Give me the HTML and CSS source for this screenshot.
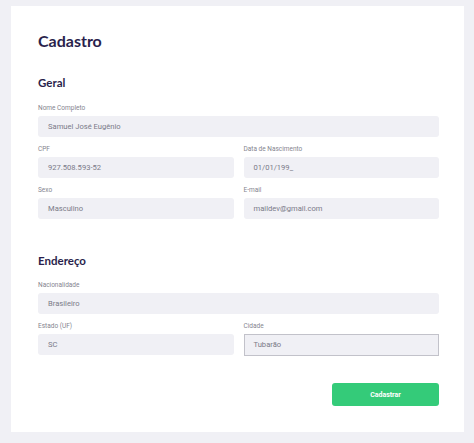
FILE: index.html
```html
<!DOCTYPE html>
<html lang="pt-BR">
<head>
<meta charset="utf-8">
<title>Cadastro</title>
<link rel="stylesheet" href="styles.css">
</head>
<body>
<form class="card">
  <h1 class="title">Cadastro</h1>

  <section class="section">
    <h2 class="section-title">Geral</h2>
    <div class="field">
      <label class="label">Nome Completo</label>
      <div class="input">Samuel José Eugênio</div>
    </div>
    <div class="row">
      <div class="field">
        <label class="label">CPF</label>
        <div class="input">927.508.593-52</div>
      </div>
      <div class="field">
        <label class="label">Data de Nascimento</label>
        <div class="input">01/01/199_</div>
      </div>
    </div>
    <div class="row">
      <div class="field">
        <label class="label">Sexo</label>
        <div class="input">Masculino</div>
      </div>
      <div class="field">
        <label class="label">E-mail</label>
        <div class="input">maildev@gmail.com</div>
      </div>
    </div>
  </section>

  <section class="section section-address">
    <h2 class="section-title">Endereço</h2>
    <div class="field">
      <label class="label">Nacionalidade</label>
      <div class="input">Brasileiro</div>
    </div>
    <div class="row">
      <div class="field">
        <label class="label">Estado (UF)</label>
        <div class="input">SC</div>
      </div>
      <div class="field">
        <label class="label">Cidade</label>
        <div class="input input-select">Tubarão</div>
      </div>
    </div>
  </section>

  <div class="actions">
    <button type="button" class="button">Cadastrar</button>
  </div>
</form>
</body>
</html>
```

FILE: styles.css
```css
* { box-sizing: border-box; }

html, body {
  margin: 0;
  padding: 0;
  background: #f0f0f5;
}

body {
  font-family: Roboto, "Liberation Sans", sans-serif;
  color: #7a7a88;
  padding: 6px 10px 11px 11px;
}

.card {
  background: #ffffff;
  height: 426px;
  padding: 25px 25px 0 27px;
  display: flex;
  flex-direction: column;
}

.title {
  margin: 0;
  font-family: Lato, "Open Sans", sans-serif;
  font-weight: 700;
  font-size: 16px;
  line-height: 20px;
  color: #2a1f4c;
}

.section {
  margin: 24px 0 0;
  display: flex;
  flex-direction: column;
  gap: 7px;
}

.section-address {
  margin-top: 34px;
}

.section-title {
  margin: 0 0 5px;
  font-family: Lato, "Open Sans", sans-serif;
  font-weight: 700;
  font-size: 11.5px;
  line-height: 16px;
  color: #2a1f4c;
}

.section-address .section-title {
  margin-bottom: 4px;
}

.row {
  display: flex;
  gap: 10px;
}

.row > .field {
  flex: 1 1 0;
}

.field {
  display: flex;
  flex-direction: column;
  gap: 3px;
  min-width: 0;
}

.label {
  font-size: 6.5px;
  line-height: 10px;
  color: #85858f;
}

.input {
  height: 21px;
  background: #f0f0f5;
  border-radius: 3px;
  padding: 0 10px;
  font-size: 7.6px;
  line-height: 21px;
  color: #7a7a88;
}

.input-select {
  border: 1px solid #c2c2ca;
  border-radius: 0;
  height: 22px;
  padding-left: 9px;
  line-height: 20px;
}

.actions {
  display: flex;
  justify-content: flex-end;
  margin-top: 27px;
}

.button {
  width: 107px;
  height: 23px;
  border: 0;
  border-radius: 3px;
  background: #34cb79;
  color: #ffffff;
  font-family: Roboto, "Liberation Sans", sans-serif;
  font-weight: 700;
  font-size: 7px;
  padding: 0;
}
```
